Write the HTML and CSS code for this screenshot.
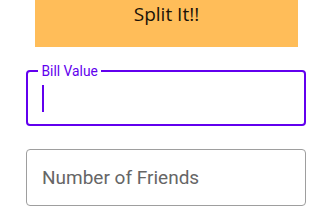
FILE: index.html
```html
<!DOCTYPE html>
<html>
<head>
<meta charset="utf-8">
<link rel="stylesheet" href="styles.css">
</head>
<body>
<div class="page">
  <div class="banner"><span class="banner-text">Split It!!</span></div>
  <div class="field field-focused">
    <span class="field-label">Bill Value</span>
    <span class="cursor"></span>
  </div>
  <div class="field field-idle">
    <span class="field-hint">Number of Friends</span>
  </div>
</div>
</body>
</html>
```
FILE: styles.css
```css
html, body {
  margin: 0;
  padding: 0;
  background: #ffffff;
}
.page {
  width: 333px;
  height: 222px;
  overflow: hidden;
  display: flex;
  flex-direction: column;
  align-items: flex-start;
}
.banner {
  margin-left: 35px;
  width: 263px;
  height: 47px;
  background: #FFBD59;
  display: flex;
  justify-content: center;
  align-items: flex-start;
}
.banner-text {
  font-family: "Open Sans", sans-serif;
  font-size: 19px;
  line-height: 19px;
  margin-top: 5px;
  color: #1a1208;
}
.field {
  margin-left: 26px;
  width: 280px;
  box-sizing: border-box;
  border-radius: 4px;
  position: relative;
  font-family: Roboto, sans-serif;
}
.field-focused {
  margin-top: 23px;
  height: 56px;
  border: 2px solid #6200EE;
  padding: 13px 0 0 14px;
}
.field-label {
  position: absolute;
  left: 10px;
  top: -8px;
  padding: 0 3.5px;
  background: #ffffff;
  color: #6200EE;
  font-size: 13.8px;
  line-height: 14px;
}
.cursor {
  display: block;
  width: 2px;
  height: 27px;
  background: #6200EE;
}
.field-idle {
  margin-top: 23px;
  height: 57px;
  border: 1px solid #9E9E9E;
  display: flex;
  align-items: center;
  padding-left: 15px;
}
.field-hint {
  color: #666666;
  font-size: 19px;
  line-height: 20px;
  margin-top: 1px;
}
```
